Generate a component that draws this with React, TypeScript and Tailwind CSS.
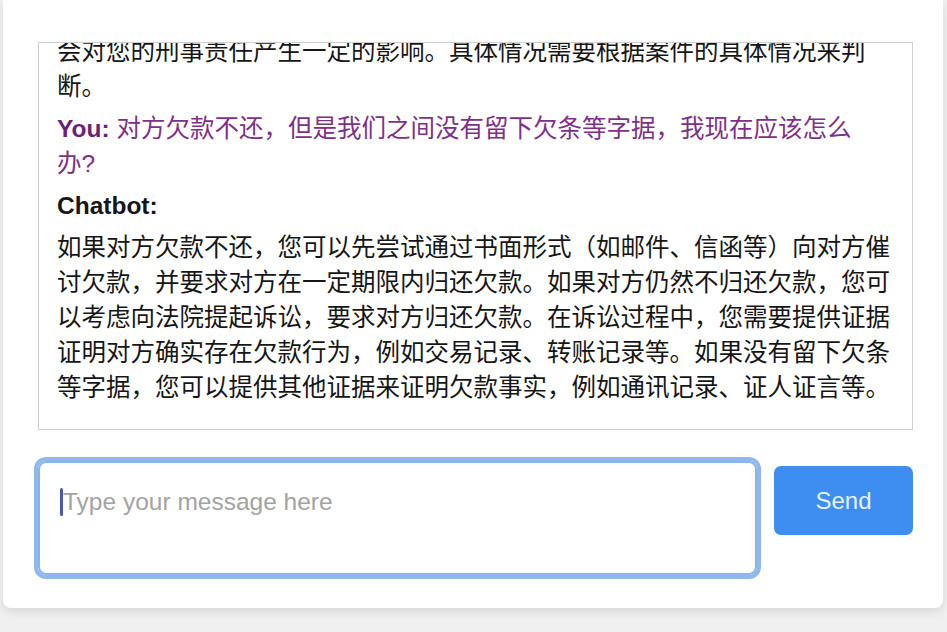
import React, { useState } from 'react';

type Msg = { from: 'user' | 'bot'; text: string };

const history: Msg[] = [
    { from: 'bot', text: '会对您的刑事责任产生一定的影响。具体情况需要根据案件的具体情况来判断。' },
    { from: 'user', text: '对方欠款不还，但是我们之间没有留下欠条等字据，我现在应该怎么' },
    { from: 'bot', text: '如果对方欠款不还，您可以先尝试通过书面形式（如邮件、信函等）向对方催讨欠款，并要求对方在一定期限内归还欠款。如果对方仍然不归还欠款，您可以考虑向法院提起诉讼，要求对方归还欠款。在诉讼过程中，您需要提供证据证明对方确实存在欠款行为，例如交易记录、转账记录等。如果没有留下欠条等字据，您可以提供其他证据来证明欠款事实，例如通讯记录、证人证言等。' },
];

const font = { fontFamily: '"Liberation Sans", "Noto Sans CJK SC", sans-serif' };

const App: React.FC = () => {
    const [draft, setDraft] = useState('');

    return (
        <div className="min-h-screen bg-[#f0f0f0] pl-[3px] pr-[4px] pb-[24px]" style={font}>
            <div className="bg-white rounded-b-lg shadow-[0_4px_10px_rgba(0,0,0,0.10)] pt-[42px] pb-[33px] pl-[35px] pr-[30px]">
                {/* chat log, scrolled to the bottom */}
                <div className="w-[875px] h-[388px] border border-[#cfcfcf] overflow-hidden flex flex-col justify-end pl-[18px] pr-[10px] pb-[17px] text-[24.5px] leading-[35px] text-[#161616]">
                    {history.map((m, i) => m.from === 'user' ? (
                        <p key={i} className="mb-[7px] text-[#7e2f8a]"><strong className="font-bold text-[#6e1f78]">You:</strong> {m.text}<br />办?</p>
                    ) : (
                        <div key={i}>
                            {i > 0 && <p className="mb-[7px] font-bold">Chatbot:</p>}
                            <p className="mb-[7px]">{m.text}</p>
                        </div>
                    ))}
                </div>

                <div className="flex items-start gap-[17px] mt-[31px]">
                    <div className="relative">
                        <textarea
                            value={draft}
                            onChange={e => setDraft(e.target.value)}
                            placeholder="Type your message here"
                            className="block w-[719px] h-[114px] resize-none rounded-lg border-2 border-[#8ab4ea] shadow-[0_0_0_4px_#8fb8ec] outline-none pl-[23px] pt-[21px] text-[24.5px] leading-[35px] text-[#222] placeholder:text-[#a3a3a3] caret-[#4553a6]"
                            style={font}
                        />
                        {!draft && <span className="absolute left-[22px] top-[27px] w-[3px] h-[28px] rounded-sm bg-[#4a58a8]" />}
                    </div>
                    <button className="mt-[5px] w-[140px] h-[69px] rounded-[7px] bg-[#3e8ef1] text-[#e6f2ff] text-[24px]">Send</button>
                </div>
            </div>
        </div>
    );
};
export default App;
